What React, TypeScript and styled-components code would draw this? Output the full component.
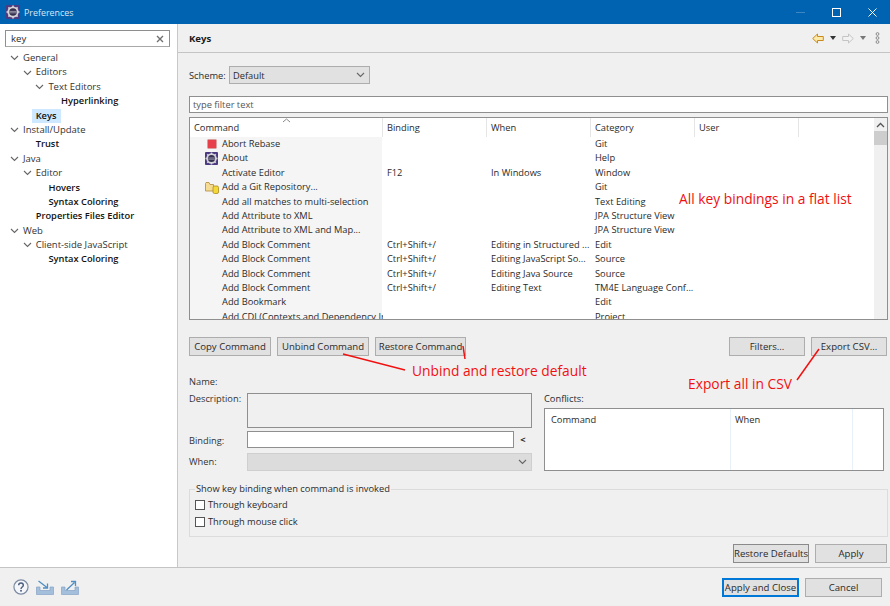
import React from 'react';
import styled, { createGlobalStyle } from 'styled-components';

const GlobalStyle = createGlobalStyle`
  html, body {
    margin: 0;
    padding: 0;
    width: 890px;
    height: 606px;
    overflow: hidden;
  }
  body {
    font-family: "Open Sans", "Noto Sans", sans-serif;
    font-size: 9.3px;
    color: #2a2a2a;
  }
  * {
    box-sizing: border-box;
  }
`;

const Window = styled.div`
  position: relative;
  width: 890px;
  height: 606px;
  display: flex;
  flex-direction: column;
  background: #f0f0f0;
`;

const TitleBar = styled.div`
  height: 24px;
  flex: none;
  display: flex;
  align-items: center;
  padding-left: 6px;
  background: #0063b1;
  color: #d9e8f5;
`;

const TitleText = styled.span`
  margin-left: 4px;
  flex: 1;
  font-size: 8.9px;
`;

const WinButton = styled.div`
  width: 36px;
  height: 24px;
  display: flex;
  align-items: center;
  justify-content: center;
`;

const Body = styled.div`
  flex: 1;
  display: flex;
  min-height: 0;
`;

const Sidebar = styled.div`
  width: 178px;
  flex: none;
  background: #fff;
  border-right: 1px solid #c8c8c8;
  padding-top: 6px;
`;

const SearchBox = styled.div`
  margin-left: 5px;
  width: 165px;
  height: 17px;
  display: flex;
  align-items: center;
  justify-content: space-between;
  padding: 0 5px;
  font-size: 9.6px;
  border: 1px solid #8f8f8f;
  border-bottom-color: #a8a8a8;
`;

const TreeList = styled.div`
  margin-top: 4px;
`;

const TreeRow = styled.div<{ $depth: number }>`
  height: 14.4px;
  display: flex;
  align-items: center;
  padding-left: ${props => 10 + props.$depth * 12.7}px;
`;

const Twisty = styled.span`
  width: 13px;
  flex: none;
  display: flex;
  align-items: center;
`;

const TreeLabel = styled.span<{ $bold?: boolean; $selected?: boolean }>`
  font-weight: ${props => (props.$bold ? 600 : 400)};
  font-size: ${props => (props.$bold ? '9.3px' : '9.5px')};
  color: ${props => (props.$bold ? '#111' : '#333')};
  background: ${props => (props.$selected ? '#cde8ff' : 'transparent')};
  line-height: 14.4px;
  margin-left: ${props => (props.$selected ? '-4px' : '0')};
  padding: ${props => (props.$selected ? '0 5px 0 4px' : '0')};
`;

const Main = styled.div`
  flex: 1;
  min-width: 0;
  display: flex;
  flex-direction: column;
`;

const PageHeader = styled.div`
  height: 29px;
  flex: none;
  display: flex;
  align-items: center;
  justify-content: space-between;
  padding: 0 10px 0 11px;
  border-bottom: 1px solid #c4c4c4;
`;

const PageTitle = styled.div`
  font-size: 9.6px;
  font-weight: 700;
  color: #1a1a1a;
`;

const HeaderTools = styled.div`
  display: flex;
  align-items: center;
  gap: 6px;
`;

const Content = styled.div`
  flex: 1;
  padding: 13px 2px 0 11px;
  display: flex;
  flex-direction: column;
`;

const SchemeRow = styled.div`
  display: flex;
  align-items: center;
  gap: 4px;
  height: 18px;
`;

const SchemeLabel = styled.span`
  width: 36px;
`;

const Select = styled.div<{ $width: number; $disabled?: boolean }>`
  width: ${props => props.$width}px;
  height: 18px;
  flex: none;
  display: flex;
  align-items: center;
  justify-content: space-between;
  padding: 0 4px 0 3px;
  background: ${props => (props.$disabled ? '#dcdcdc' : '#e1e1e1')};
  border: 1px solid ${props => (props.$disabled ? '#cfcfcf' : '#adadad')};
`;

const FilterInput = styled.div`
  margin-top: 12px;
  height: 17px;
  flex: none;
  padding: 0 3px;
  line-height: 15px;
  color: #555;
  background: #fff;
  border: 1px solid #8f8f8f;
`;

const TableFrame = styled.div`
  position: relative;
  margin-top: 4px;
  height: 203px;
  flex: none;
  display: flex;
  background: #fff;
  border: 1px solid #8f8f8f;
  overflow: hidden;
`;

const TableArea = styled.div`
  flex: 1;
  min-width: 0;
`;

const HeaderRow = styled.div`
  height: 19px;
  display: grid;
  grid-template-columns: 193px 104px 104px 104px 104px;
`;

const HeaderCell = styled.div`
  padding-left: 4px;
  line-height: 19px;
  border-right: 1px solid #e5e5e5;
`;

const SortMark = styled.svg`
  position: absolute;
  left: 92px;
  top: 0;
`;

const TableRows = styled.div`
  position: relative;
  display: grid;
  grid-template-columns: 193px 104px 104px 104px;
  grid-auto-rows: 14.4px;
  background: linear-gradient(to right, #f5f5f5 192px, #fff 192px);
  height: 184px;
`;

const CommandCell = styled.div`
  display: flex;
  align-items: center;
  padding-left: 11px;
  line-height: 14.4px;
  white-space: nowrap;
  overflow: hidden;
`;

const IconSlot = styled.span`
  width: 21px;
  flex: none;
  display: flex;
  justify-content: center;
`;

const Cell = styled.div`
  padding-left: 4px;
  line-height: 14.4px;
  white-space: nowrap;
  overflow: hidden;
`;

const Scrollbar = styled.div`
  width: 14px;
  flex: none;
  padding-left: 1px;
  background: #fff;
  display: flex;
  flex-direction: column;
`;

const ScrollUp = styled.div`
  height: 13px;
  display: flex;
  align-items: center;
  justify-content: center;
  background: #f0f0f0;
`;

const ScrollThumb = styled.div`
  height: 14px;
  background: #cdcdcd;
`;

const ScrollTrack = styled.div`
  flex: 1;
  background: #f0f0f0;
`;

const ActionRow = styled.div`
  margin: 17px 1px 0 0;
  display: flex;
  height: 19px;
  flex: none;
`;

const ActionGap = styled.div`
  flex: 1;
`;

const Button = styled.div<{ $width: number; $gap?: number; $focused?: boolean; $strong?: boolean }>`
  width: ${props => props.$width}px;
  margin-left: ${props => props.$gap ?? 0}px;
  height: 19px;
  flex: none;
  display: flex;
  align-items: center;
  justify-content: center;
  font-size: 9.6px;
  white-space: nowrap;
  background: #e1e1e1;
  border: ${props =>
    props.$focused ? '2px solid #0078d7' : `1px solid ${props.$strong ? '#8a8a8a' : '#adadad'}`};
`;

const FormArea = styled.div`
  margin-top: 18px;
  height: 97px;
  flex: none;
  display: flex;
  gap: 12px;
`;

const FormGrid = styled.div`
  width: 343px;
  display: grid;
  grid-template-columns: 58px 285px;
  grid-template-rows: 16px 35px 19px 18px;
  row-gap: 3px;
`;

const FieldLabel = styled.div<{ $top?: boolean }>`
  display: flex;
  align-items: ${props => (props.$top ? 'flex-start' : 'center')};
  line-height: 12px;
  color: #333;
`;

const DescriptionBox = styled.div`
  background: #f0f0f0;
  border: 1px solid #8f8f8f;
`;

const BindingRow = styled.div`
  display: flex;
  align-items: flex-start;
`;

const BindingInput = styled.div`
  width: 267px;
  height: 17px;
  flex: none;
  background: #fff;
  border: 1px solid #8f8f8f;
`;

const BindingArrow = styled.div`
  flex: 1;
  line-height: 17px;
  text-align: center;
  font-weight: 700;
`;

const ConflictsColumn = styled.div`
  width: 340px;
  padding-top: 18px;
  display: flex;
  flex-direction: column;
`;

const ConflictsTable = styled.div`
  margin-top: 3px;
  height: 63px;
  display: grid;
  grid-template-columns: 186px 122px 1fr;
  background: #fff;
  border: 1px solid #8f8f8f;
`;

const ConflictCell = styled.div`
  padding: 4px 0 0 6px;
  border-right: 1px solid #e8f0f8;
  & + & {
    padding-left: 4px;
  }
  &:last-child {
    border-right: 0;
  }
`;

const GroupBox = styled.fieldset`
  margin: 11px 0 0;
  padding: 0 0 0 5px;
  height: 55px;
  flex: none;
  border: 1px solid #dcdcdc;
`;

const GroupLegend = styled.legend`
  margin-left: 0;
  padding: 0 1px;
  line-height: 14px;
`;

const CheckRow = styled.div`
  height: 17px;
  display: flex;
  align-items: center;
  gap: 3px;
`;

const CheckBox = styled.span`
  width: 10px;
  height: 10px;
  flex: none;
  background: #fff;
  border: 1px solid #555;
`;

const PageButtons = styled.div`
  margin: 7px 1px 0 0;
  display: flex;
  justify-content: flex-end;
`;

const Footer = styled.div`
  height: 39px;
  flex: none;
  display: flex;
  align-items: center;
  padding: 0 8px 0 13px;
  border-top: 1px solid #c4c4c4;
`;

const FooterIcons = styled.div`
  flex: 1;
  display: flex;
  align-items: center;
  gap: 7px;
`;

const Note = styled.div<{ $x: number; $y: number }>`
  position: absolute;
  left: ${props => props.$x}px;
  top: ${props => props.$y}px;
  color: #f01010;
  font-size: 13.8px;
  line-height: 18px;
  white-space: nowrap;
`;

const NoteLines = styled.svg`
  position: absolute;
  left: 0;
  top: 0;
  pointer-events: none;
`;

const Chevron = () => (
  <svg width="9" height="6" viewBox="0 0 9 6">
    <path d="M1 1l3.5 3.5L8 1" fill="none" stroke="#666" strokeWidth="1.1" />
  </svg>
);

const EclipseIcon = ({ size = 13 }: { size?: number }) => (
  <svg width={size} height={size} viewBox="0 0 14 14">
    <rect width="14" height="14" rx="1" fill="#4b3a80" />
    <circle cx="7" cy="7" r="5.6" fill="#d4d4d8" />
    <g stroke="#d4d4d8" strokeWidth="1.6">
      <path d="M7 0.5v13M0.5 7h13M2.4 2.4l9.2 9.2M11.6 2.4l-9.2 9.2" />
    </g>
    <circle cx="7" cy="7" r="3.8" fill="#35304f" />
    <path d="M3.4 6.4h7.2M3.4 7.8h7.2" stroke="#b9b9c8" strokeWidth="0.7" />
  </svg>
);

const AbortIcon = () => (
  <svg width="10" height="10" viewBox="0 0 10 10">
    <rect x="0.5" y="0.5" width="9" height="9" rx="1" fill="#e8404a" stroke="#d8a0a0" />
  </svg>
);

const RepoIcon = () => (
  <svg width="14" height="13" viewBox="0 0 14 13">
    <path d="M0.5 2.5V10h8V3.5H5L4 1.5H1z" fill="#f6dc92" stroke="#b08a3c" strokeWidth="0.8" />
    <rect x="8" y="5" width="5.5" height="7.5" rx="1.5" fill="#f4d836" stroke="#a98a20" strokeWidth="0.8" />
  </svg>
);

const ArrowLeft = ({ fill, stroke }: { fill: string; stroke: string }) => (
  <svg width="12" height="11" viewBox="0 0 12 11">
    <path d="M0.7 5.5L5.5 1v2.5h5.8v4H5.5V10z" fill={fill} stroke={stroke} strokeWidth="1" />
  </svg>
);

const ArrowRight = ({ fill, stroke }: { fill: string; stroke: string }) => (
  <svg width="12" height="11" viewBox="0 0 12 11">
    <path d="M11.3 5.5L6.5 1v2.5H0.7v4h5.8V10z" fill={fill} stroke={stroke} strokeWidth="1" />
  </svg>
);

const DropMark = ({ color }: { color: string }) => (
  <svg width="6" height="4" viewBox="0 0 6 4">
    <path d="M0 0h6L3 4z" fill={color} />
  </svg>
);

const MenuDots = () => (
  <svg width="5" height="12" viewBox="0 0 5 12" style={{ marginLeft: 3 }}>
    <g fill="none" stroke="#8a8a8a">
      <circle cx="2.5" cy="2" r="1.4" />
      <circle cx="2.5" cy="6" r="1.4" />
      <circle cx="2.5" cy="10" r="1.4" />
    </g>
  </svg>
);

const HelpIcon = () => (
  <svg width="16" height="16" viewBox="0 0 17 17">
    <circle cx="8.5" cy="8.5" r="7.5" fill="#f4f6fa" stroke="#7c8ba3" strokeWidth="1.3" />
    <path d="M6 6.6c0-3.2 5-3.2 5 0 0 1.9-2.5 1.9-2.5 3.9" fill="none" stroke="#4d5f80" strokeWidth="1.5" />
    <rect x="7.6" y="11.6" width="1.8" height="1.8" fill="#4d5f80" />
  </svg>
);

const TrayIcon = ({ out }: { out?: boolean }) => (
  <svg width="18" height="15" viewBox="0 0 18 15">
    <path d="M0.5 7h3.5v3.5h10V7h3.5v7.5H0.5z" fill="#a3bfdc" stroke="#86a4c6" strokeWidth="0.7" />
    {out ? (
      <path d="M5.5 10L13.5 2.5M10 1.5h4.5V6" fill="none" stroke="#4f8fc4" strokeWidth="1.3" />
    ) : (
      <path d="M2.5 1L11 7.5M11.5 3.5V8H7" fill="none" stroke="#4f8fc4" strokeWidth="1.3" />
    )}
  </svg>
);

interface TreeNode {
  label: string;
  depth: number;
  open?: boolean;
  bold?: boolean;
  selected?: boolean;
}

const treeNodes: TreeNode[] = [
  { label: 'General', depth: 0, open: true },
  { label: 'Editors', depth: 1, open: true },
  { label: 'Text Editors', depth: 2, open: true },
  { label: 'Hyperlinking', depth: 3, bold: true },
  { label: 'Keys', depth: 1, bold: true, selected: true },
  { label: 'Install/Update', depth: 0, open: true },
  { label: 'Trust', depth: 1, bold: true },
  { label: 'Java', depth: 0, open: true },
  { label: 'Editor', depth: 1, open: true },
  { label: 'Hovers', depth: 2, bold: true },
  { label: 'Syntax Coloring', depth: 2, bold: true },
  { label: 'Properties Files Editor', depth: 1, bold: true },
  { label: 'Web', depth: 0, open: true },
  { label: 'Client-side JavaScript', depth: 1, open: true },
  { label: 'Syntax Coloring', depth: 2, bold: true },
];

interface CommandRow {
  command: string;
  binding?: string;
  when?: string;
  category: string;
  icon?: React.ReactNode;
}

const commandRows: CommandRow[] = [
  { command: 'Abort Rebase', category: 'Git', icon: <AbortIcon /> },
  { command: 'About', category: 'Help', icon: <EclipseIcon /> },
  { command: 'Activate Editor', binding: 'F12', when: 'In Windows', category: 'Window' },
  { command: 'Add a Git Repository...', category: 'Git', icon: <RepoIcon /> },
  { command: 'Add all matches to multi-selection', category: 'Text Editing' },
  { command: 'Add Attribute to XML', category: 'JPA Structure View' },
  { command: 'Add Attribute to XML and Map...', category: 'JPA Structure View' },
  { command: 'Add Block Comment', binding: 'Ctrl+Shift+/', when: 'Editing in Structured ...', category: 'Edit' },
  { command: 'Add Block Comment', binding: 'Ctrl+Shift+/', when: 'Editing JavaScript So...', category: 'Source' },
  { command: 'Add Block Comment', binding: 'Ctrl+Shift+/', when: 'Editing Java Source', category: 'Source' },
  { command: 'Add Block Comment', binding: 'Ctrl+Shift+/', when: 'Editing Text', category: 'TM4E Language Conf...' },
  { command: 'Add Bookmark', category: 'Edit' },
  { command: 'Add CDI (Contexts and Dependency Ir', category: 'Project' },
];

const App: React.FC = () => (
  <Window>
    <GlobalStyle />
    <TitleBar>
      <EclipseIcon size={14} />
      <TitleText>Preferences</TitleText>
      <WinButton>
        <svg width="9" height="9" viewBox="0 0 9 9">
          <path d="M0 4.5h9" stroke="#3d86c4" />
        </svg>
      </WinButton>
      <WinButton>
        <svg width="9" height="9" viewBox="0 0 9 9">
          <rect x="0.5" y="0.5" width="8" height="8" fill="none" stroke="#fff" />
        </svg>
      </WinButton>
      <WinButton>
        <svg width="9" height="9" viewBox="0 0 9 9">
          <path d="M0.5 0.5l8 8M8.5 0.5l-8 8" stroke="#fff" />
        </svg>
      </WinButton>
    </TitleBar>

    <Body>
      <Sidebar>
        <SearchBox>
          <span>key</span>
          <svg width="8" height="8" viewBox="0 0 8 8">
            <path d="M1 1l6 6M7 1L1 7" stroke="#707070" strokeWidth="1.4" />
          </svg>
        </SearchBox>
        <TreeList>
          {treeNodes.map((node, i) => (
            <TreeRow key={i} $depth={node.depth}>
              <Twisty>{node.open && <Chevron />}</Twisty>
              <TreeLabel $bold={node.bold} $selected={node.selected}>
                {node.label}
              </TreeLabel>
            </TreeRow>
          ))}
        </TreeList>
      </Sidebar>

      <Main>
        <PageHeader>
          <PageTitle>Keys</PageTitle>
          <HeaderTools>
            <ArrowLeft fill="#fde9a8" stroke="#c98a1c" />
            <DropMark color="#333" />
            <ArrowRight fill="#f2f2f2" stroke="#c4c4c4" />
            <DropMark color="#777" />
            <MenuDots />
          </HeaderTools>
        </PageHeader>

        <Content>
          <SchemeRow>
            <SchemeLabel>Scheme:</SchemeLabel>
            <Select $width={141}>
              <span>Default</span>
              <Chevron />
            </Select>
          </SchemeRow>

          <FilterInput>type filter text</FilterInput>

          <TableFrame>
            <SortMark width="9" height="5" viewBox="0 0 9 5">
              <path d="M1 4l3.5-3L8 4" fill="none" stroke="#888" />
            </SortMark>
            <TableArea>
              <HeaderRow>
                <HeaderCell>Command</HeaderCell>
                <HeaderCell>Binding</HeaderCell>
                <HeaderCell>When</HeaderCell>
                <HeaderCell>Category</HeaderCell>
                <HeaderCell>User</HeaderCell>
              </HeaderRow>
              <TableRows>
                {commandRows.map((row, i) => (
                  <React.Fragment key={i}>
                    <CommandCell>
                      <IconSlot>{row.icon}</IconSlot>
                      {row.command}
                    </CommandCell>
                    <Cell>{row.binding}</Cell>
                    <Cell>{row.when}</Cell>
                    <Cell>{row.category}</Cell>
                  </React.Fragment>
                ))}
              </TableRows>
            </TableArea>
            <Scrollbar>
              <ScrollUp>
                <svg width="9" height="6" viewBox="0 0 9 6">
                  <path d="M1 5l3.5-3.5L8 5" fill="none" stroke="#555" strokeWidth="1.3" />
                </svg>
              </ScrollUp>
              <ScrollThumb />
              <ScrollTrack />
            </Scrollbar>
          </TableFrame>

          <ActionRow>
            <Button $width={82}>Copy Command</Button>
            <Button $width={92} $gap={6}>Unbind Command</Button>
            <Button $width={91} $gap={6}>Restore Command</Button>
            <ActionGap />
            <Button $width={76}>Filters...</Button>
            <Button $width={76} $gap={6}>Export CSV...</Button>
          </ActionRow>

          <FormArea>
            <FormGrid>
              <FieldLabel>Name:</FieldLabel>
              <span />
              <FieldLabel $top>Description:</FieldLabel>
              <DescriptionBox />
              <FieldLabel>Binding:</FieldLabel>
              <BindingRow>
                <BindingInput />
                <BindingArrow>&lt;</BindingArrow>
              </BindingRow>
              <FieldLabel>When:</FieldLabel>
              <Select $width={285} $disabled>
                <span />
                <Chevron />
              </Select>
            </FormGrid>
            <ConflictsColumn>
              <span>Conflicts:</span>
              <ConflictsTable>
                <ConflictCell>Command</ConflictCell>
                <ConflictCell>When</ConflictCell>
                <ConflictCell />
              </ConflictsTable>
            </ConflictsColumn>
          </FormArea>

          <GroupBox>
            <GroupLegend>Show key binding when command is invoked</GroupLegend>
            <CheckRow>
              <CheckBox />
              Through keyboard
            </CheckRow>
            <CheckRow>
              <CheckBox />
              Through mouse click
            </CheckRow>
          </GroupBox>

          <PageButtons>
            <Button $width={76} $strong>Restore Defaults</Button>
            <Button $width={72} $gap={6}>Apply</Button>
          </PageButtons>
        </Content>
      </Main>
    </Body>

    <Footer>
      <FooterIcons>
        <HelpIcon />
        <TrayIcon />
        <TrayIcon out />
      </FooterIcons>
      <Button $width={77} $focused>Apply and Close</Button>
      <Button $width={77} $gap={6}>Cancel</Button>
    </Footer>

    <Note $x={679} $y={190}>All key bindings in a flat list</Note>
    <Note $x={412} $y={362}>Unbind and restore default</Note>
    <Note $x={688} $y={375}>Export all in CSV</Note>
    <NoteLines width="890" height="606" viewBox="0 0 890 606">
      <g stroke="#f01010" strokeWidth="1.5" fill="none">
        <path d="M343 354l62 16" />
        <path d="M463 346l2 13" />
        <path d="M819 349l-22 31" />
      </g>
    </NoteLines>
  </Window>
);

export default App;
